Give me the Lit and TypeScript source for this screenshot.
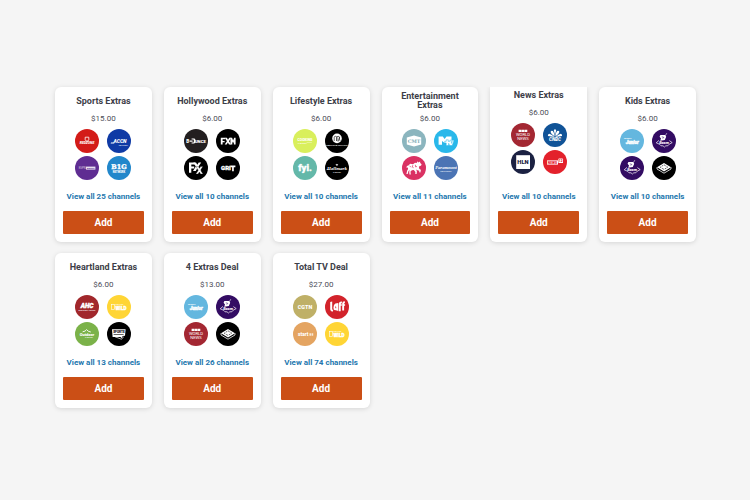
import { LitElement, html, svg, css, SVGTemplateResult } from "lit";
import { customElement, property } from "lit/decorators.js";
import { classMap } from "lit/directives/class-map.js";

interface Logo {
  name: string;
  color: string;
  art: SVGTemplateResult;
}

interface Pack {
  name: string;
  price: string;
  count: number;
  logos: string[];
  raised?: boolean;
}

const logos: Record<string, Logo> = {
  redzone: {
    name: "RedZone",
    color: "#d31b18",
    art: svg`<path d="M10.2 8.2h3.6v2.6q0 .9-1.8 1.4-1.8-.5-1.8-1.4z" fill="none" stroke="#fff" stroke-width=".8"/>
      <text class="b i" x="12" y="15.2" font-size="3.4">REDZONE</text>`,
  },
  accn: {
    name: "ACC Network",
    color: "#0f3aa5",
    art: svg`<text class="b i" x="13" y="13.6" font-size="5">ACCN</text>
      <path d="M4 13.6h4l-1 .8H3.6z"/><text x="16.4" y="16.6" font-size="2">NETWORK</text>`,
  },
  bases: {
    name: "Bases Loaded",
    color: "#5f2d92",
    art: svg`<text x="7.2" y="13" font-size="2.8" opacity=".7">ESPN</text>
      <rect x="11" y="10.6" width="9.4" height="3" opacity=".85"/>
      <text class="b" x="15.7" y="13.1" font-size="2.4" style="fill:#5f2d92">BASES</text>`,
  },
  big: {
    name: "Big Ten Network",
    color: "#2287cb",
    art: svg`<text class="slab" x="12" y="12.8" font-size="6.4" stroke="#fff" stroke-width=".4">B1G</text>
      <text class="b" x="12" y="16.8" font-size="2.6">NETWORK</text>`,
  },
  bounce: {
    name: "Bounce",
    color: "#231f20",
    art: svg`<text class="b" x="3.8" y="13.8" font-size="4.6">B</text><text class="b" x="16.3" y="13.8" font-size="4.4">UNCE</text>
      <path d="M5.6 11.6h3v1.2h-3zM7.6 9.6h2.6q1.3 0 1.3 2.4t-1.3 2.4H7.6v-1h2q.6-1.4 0-2.8h-2z"/>`,
  },
  fxm: {
    name: "FXM",
    color: "#000000",
    art: svg`<path d="M4.8 8.8h4.4v1.5H6.6V12h2v1.3h-2v2.3H4.8z"/>
      <path d="M8.8 8.8h2.1l1.1 2 1.2-2h2l-2.2 3.4 2.1 3.4H13l-1.1-2.1-1.2 2.1h-2l2.2-3.4z"/>
      <path d="M14.4 8.8h1.7l1 2.6 1.1-2.6h1.4v6.8h-1.7v-3.2l-.8 1.8-.8-1.8v3.2h-1.9z"/>`,
  },
  fxx: {
    name: "FXX",
    color: "#000000",
    art: svg`<path d="M5 6.4h6v2.1H7.3v2.1h2.9v1.9H7.3v4.3H5z"/>
      <path d="M9.3 6.4h2.7l1.3 2.4 1.4-2.4h2.5l-2.7 4.2 2.8 4.3h-2.6l-1.5-2.5-1.5 2.5H9l2.8-4.3z"/>
      <path d="M12 10.6h2.3l1.1 1.8 1.2-1.8h2.3l-2.4 3.6 2.5 3.8h-2.4l-1.2-2-1.4 2h-2.2l2.5-3.8z" stroke="#000" stroke-width=".3"/>`,
  },
  grit: {
    name: "Grit",
    color: "#000000",
    art: svg`<text class="b" x="10" y="14.2" font-size="6" stroke="#fff" stroke-width=".3">GRI</text>
      <path d="M14.4 9.6h5v1.6h-1.6v4h-1.7v-4h-1.7z"/>`,
  },
  cooking: {
    name: "Cooking Channel",
    color: "#d9ef5c",
    art: svg`<text class="b" x="12" y="12" font-size="3.4">COOKING</text>
      <text x="9.2" y="14.6" font-size="2">CHANNEL</text><path d="M13.6 13.2h5.2v.7h-5.2z" opacity=".5"/>`,
  },
  magnolia: {
    name: "Magnolia Network",
    color: "#000000",
    art: svg`<circle cx="12" cy="9.4" r="4.8"/>
      <path d="M9.2 12V8.6q0-1.3 1.3-1.3t1.3 1.3V12 8.6q0-1.3 1.3-1.3t1.3 1.3v2q0 1 1 .8M13 12.6l1.8-4.8" fill="none" stroke="#000" stroke-width=".6"/>
      <text x="12" y="17" font-size="2.2">MAGNOLIA NETWORK</text>`,
  },
  fyi: {
    name: "FYI",
    color: "#64b8a9",
    art: svg`<text class="b" x="12" y="14.6" font-size="9.4" stroke="#fff" stroke-width=".3">fyi.</text>`,
  },
  hallmark: {
    name: "Hallmark",
    color: "#000000",
    art: svg`<path d="M10.6 8l.5 1.4h1.6l.5-1.4-.8.6-.5-.9-.5.9z"/>
      <text class="script" x="12" y="13.8" font-size="5">Hallmark</text>
      <text x="12" y="16.8" font-size="1.8">CHANNEL</text><path d="M1.6 13.4h2.6v.5H1.6z"/>`,
  },
  cmt: {
    name: "CMT",
    color: "#8bb5be",
    art: svg`<path d="M12 6.4l7.2 2.2v6.8L12 17.6l-7.2-2.2V8.6z"/>
      <text class="slab" x="12" y="13.8" font-size="4.8" style="fill:#7eacb6">CMT</text>`,
  },
  mtv: {
    name: "MTV",
    color: "#29b8ea",
    art: svg`<path d="M4.6 7.4h4.2l1.8 2.6 1.9-2.6h5v8.4h-3.2V12l-1.7 2h-2L8 12v3.8H4.6z"/>
      <path d="M10.6 12.4h1.6v-1.6h2.1v1.6h1.6v-1.2h4.2l-1.9 5.3h-2.6l-.6-2h-.5v2h-2.3v-2.6h-1.6z" stroke="#29b8ea" stroke-width=".5"/>
      <path d="M17.2 11.8l.4 2.6.8-2.6" fill="none" stroke="#29b8ea" stroke-width=".5"/>`,
  },
  bull: {
    name: "Western Channel",
    color: "#da3263",
    art: svg`<path d="M4.4 11.8l.5-1.8 1.5-.5 1.8-1.7 2.8.4 2-1.4 1.6.2 1.2-1.7.5 1.2 1.8-1 .1 1.6 1.4 1.2-.6 1.5-1.6.1-.5 2 .9 1.4 1.1.5-.5 2.6-1.2-.2.1-1.4-1.8-.6-1.3-.6.7 1.8-.3 2.5h-1.3l.1-2-1.6-1.9-1.9.2-1.4 1.3.3 2.9H7.5l-.3-2.6.6-1.6-1.3.8-.8 2.9H4.4l.8-3.4.9-1.6-.3-1.4z"/>
      <path d="M7.6 9.8l1.4 1.5M10.8 9.2l-.6 1.8 1.4.7M13.4 8.8l.1 2 1.5-.3" fill="none" stroke="#da3263" stroke-width=".7"/>`,
  },
  paramount: {
    name: "Paramount Network",
    color: "#4b74b4",
    art: svg`<text class="script" x="12" y="12.8" font-size="4.6">Paramount</text>
      <text x="12" y="15.8" font-size="2.4">NETWORK</text>`,
  },
  bbc: {
    name: "BBC World News",
    color: "#a32732",
    art: svg`<path d="M7.6 6.7h2.7V9H7.6zM10.6 6.7h2.7V9h-2.7zM13.6 6.7h2.7V9h-2.7z"/>
      <text x="12" y="13.2" font-size="4.2">WORLD</text><text x="12" y="17.4" font-size="4.2">NEWS</text>`,
  },
  cnbc: {
    name: "CNBC",
    color: "#105397",
    art: svg`<path d="M11.6 14L4.9 12.9q-.3-2 1.4-2.2 1.8.3 5.3 3.3zM11.7 13.6Q7.3 10.2 7.6 8.7q.7-1.6 2.2-.8 1.2 1.1 1.9 5.7zM12 12.2l-1.2-5Q12 5.3 13.2 7.2zM12.3 13.6q.6-4.6 1.9-5.7 1.5-.8 2.2.8.2 1.5-4.1 4.9zM12.4 14l6.7-1.1q.3-2-1.4-2.2-1.8.3-5.3 3.3z"/>
      <text class="b i" x="12" y="17.8" font-size="4.6">CNBC</text>`,
  },
  hln: {
    name: "HLN",
    color: "#1b2142",
    art: svg`<rect x="5.2" y="5.2" width="13.8" height="13.8"/>
      <text class="b" x="12" y="14.2" font-size="5.8" style="fill:#1b2142">HLN</text>`,
  },
  news12: {
    name: "News 12",
    color: "#e3212b",
    art: svg`<rect x="4" y="10.4" width="11" height="4.2"/>
      <text class="b" x="9.5" y="13.8" font-size="3.4" style="fill:#e3212b">NEWS</text>
      <rect x="15.4" y="8.6" width="4.6" height="4.4" rx=".6"/>
      <text class="b" x="17.7" y="12" font-size="3.2" style="fill:#e3212b">12</text>`,
  },
  junior: {
    name: "Disney Junior",
    color: "#64b7df",
    art: svg`<text class="script" x="7.8" y="9.6" font-size="2.8">Disney</text>
      <text class="b i" x="12.2" y="14.8" font-size="4.6" stroke="#fff" stroke-width=".4">Junior</text>`,
  },
  boomerang: {
    name: "Boomerang",
    color: "#330c63",
    art: svg`<path d="M8.4 6h4.8l1 1.8-1.4 3.2-4.6.8.8-2.4-1.4-1.6z"/>
      <path d="M13.4 6.6l1.4-2.4M9.8 7.6l2.6.6" stroke="#fff" stroke-width=".6"/>
      <path d="M9.8 7.8l2 .6-1 1.2" fill="none" stroke="#330c63" stroke-width=".6"/>
      <path d="M7 11.4l-2.8 2.4 3.2 1.4 1.6 1.6h2l1.4 1.2 1.4-1.2h2l1.4-1.6 3-1.6-2.8-2" fill="none" stroke="#fff" stroke-width=".7"/>
      <text class="b i" x="12" y="14.6" font-size="3.8">Boom</text>`,
  },
  tiles: {
    name: "Kids Stack",
    color: "#000000",
    art: svg`<path d="M12 7l7 4.2-7 4.2-7-4.2z"/>
      <path d="M5 11.2v1.8l7 4.2 7-4.2v-1.8" fill="none" stroke="#fff" stroke-width=".8"/>
      <path d="M12 8.8l3.8 2.4-3.8 2.2-3.8-2.2z" fill="none" stroke="#000" stroke-width=".6" stroke-dasharray="2 1"/>`,
  },
  ahc: {
    name: "American Heroes Channel",
    color: "#a1272b",
    art: svg`<text class="b i" x="12" y="13.2" font-size="6.4" stroke="#fff" stroke-width=".4">AHC</text>
      <text x="12" y="16.4" font-size="1.9">AMERICAN HEROES</text>`,
  },
  wild: {
    name: "Nat Geo Wild",
    color: "#ffd535",
    art: svg`<rect x="4.4" y="9.6" width="3.2" height="5" fill="none" stroke="#fff" stroke-width=".6"/>
      <text x="12.4" y="10" font-size="2">NAT GEO</text>
      <text class="b" x="14" y="15" font-size="4.6" stroke="#fff" stroke-width=".3">WILD</text>`,
  },
  outdoor: {
    name: "Outdoor Channel",
    color: "#7bb249",
    art: svg`<path d="M7.6 9.8q2.8-.3 4-2.2 1.2 2 4.2 2.4" fill="none" stroke="#fff" stroke-width=".9"/>
      <text class="b" x="12" y="13.8" font-size="4">Outdoor</text>
      <text x="14" y="16.4" font-size="1.8">CHANNEL</text>`,
  },
  sports: {
    name: "Sportsman Channel",
    color: "#000000",
    art: svg`<path d="M5 7.2h13.6l-.6 6.6-2.4.3-.6 2.2-1.6-1.2-7.8-.2z"/>
      <path d="M8 14.8l6.4 2.4 2.4-2.4" fill="none" stroke="#fff" stroke-width=".7"/>
      <text class="b" x="11.9" y="10.8" font-size="3" style="fill:#000">SPORTS</text><path d="M6.6 12.2h10v.6h-10z" style="fill:#000"/>`,
  },
  cgtn: {
    name: "CGTN",
    color: "#bfb067",
    art: svg`<text class="b" x="12" y="14" font-size="5.4">CGTN</text>`,
  },
  laff: {
    name: "Laff",
    color: "#d2232b",
    art: svg`<path d="M5.2 7l2-.4v8l1.1.5-.7 1.7q-2.2-.3-2.4-2.2z"/>
      <path d="M10.4 8.5l2.8-.6v7.8h-1.6l-.4-.7q-2.8 1.1-2.8-2.3.1-3.4 2-4.2zm.5 2.2q-1.4 2.6.4 2.6z" fill-rule="evenodd"/>
      <path d="M13.7 16.2V9q.2-2.8 3.2-2.6v1.8q-1.2 0-1.2 1.1h1.1v1.5h-1.1v5.4zM17.2 15.6V8.6q.2-2.5 2.7-2.2v1.7q-.8 0-.8 1.1h1v1.5h-1v4.9z"/>`,
  },
  starts: {
    name: "Start TV",
    color: "#e4a461",
    art: svg`<text class="b" x="10.2" y="13.8" font-size="4.8">start</text>
      <path d="M16.4 11.2H18v2.6h-1.6zM18.5 11.2h1.7v2.6h-1.7z" opacity=".75"/>`,
  },
};

const packs: Pack[] = [
  { name: "Sports Extras", price: "$15.00", count: 25, logos: ["redzone", "accn", "bases", "big"] },
  { name: "Hollywood Extras", price: "$6.00", count: 10, logos: ["bounce", "fxm", "fxx", "grit"] },
  { name: "Lifestyle Extras", price: "$6.00", count: 10, logos: ["cooking", "magnolia", "fyi", "hallmark"] },
  { name: "Entertainment Extras", price: "$6.00", count: 11, logos: ["cmt", "mtv", "bull", "paramount"] },
  { name: "News Extras", price: "$6.00", count: 10, logos: ["bbc", "cnbc", "hln", "news12"], raised: true },
  { name: "Kids Extras", price: "$6.00", count: 10, logos: ["junior", "boomerang", "boomerang", "tiles"] },
  { name: "Heartland Extras", price: "$6.00", count: 13, logos: ["ahc", "wild", "outdoor", "sports"] },
  { name: "4 Extras Deal", price: "$13.00", count: 26, logos: ["junior", "boomerang", "bbc", "tiles"] },
  { name: "Total TV Deal", price: "$27.00", count: 74, logos: ["cgtn", "laff", "starts", "wild"] },
];

@customElement("channel-logo")
export class ChannelLogo extends LitElement {
  @property() logo = "";

  static styles = css`
    :host {
      display: block;
    }
    .logo {
      display: block;
      width: 24px;
      height: 24px;
      fill: #fff;
      font-family: Roboto, "Liberation Sans", sans-serif;
    }
    text {
      fill: #fff;
      text-anchor: middle;
    }
    .b {
      font-weight: 900;
    }
    .i {
      font-style: italic;
    }
    .slab {
      font-family: "DejaVu Serif", serif;
      font-weight: 700;
    }
    .script {
      font-family: "Liberation Serif", serif;
      font-style: italic;
      font-weight: 700;
    }
  `;

  render() {
    const l = logos[this.logo];
    return html`<svg class="logo" viewBox="0 0 24 24" role="img" aria-label=${l.name}>
      <circle cx="12" cy="12" r="12" fill=${l.color}></circle>
      ${l.art}
    </svg>`;
  }
}

@customElement("pack-card")
export class PackCard extends LitElement {
  @property({ attribute: false }) pack!: Pack;

  static styles = css`
    :host {
      display: block;
    }
    .card {
      box-sizing: border-box;
      height: 100%;
      display: flex;
      flex-direction: column;
      align-items: center;
      padding: 5px 8px 8px;
      background: #fff;
      border-radius: 6px;
      box-shadow: 0 1px 5px rgba(0, 0, 0, 0.13);
      text-align: center;
    }
    .title {
      display: flex;
      align-items: center;
      min-height: 18px;
      margin: 0;
      font-size: 9px;
      line-height: 9px;
      font-weight: 700;
      color: #3d3e48;
    }
    .raised {
      padding-top: 0;
      border-radius: 0 0 6px 6px;
      clip-path: inset(0 -8px -8px);
    }
    .raised .title {
      min-height: 17px;
    }
    .price {
      margin: 3px 0 4px;
      font-size: 8px;
      line-height: 12px;
      color: #4c4d57;
    }
    .logos {
      display: grid;
      grid-template-columns: 24px 24px;
      gap: 3px 8px;
      margin-bottom: 11px;
    }
    .more {
      margin-top: auto;
      font-size: 8px;
      line-height: 12px;
      font-weight: 700;
      color: #2377ae;
      text-decoration: none;
      white-space: nowrap;
    }
    .add {
      align-self: stretch;
      height: 23px;
      margin: 8px 0 0;
      padding: 0;
      border: 0;
      border-radius: 1px;
      background: #cb4f16;
      color: #fff;
      font: 700 10px/12px Roboto, "Liberation Sans", sans-serif;
      cursor: pointer;
    }
  `;

  render() {
    const p = this.pack;
    return html`<article class=${classMap({ card: true, raised: !!p.raised })}>
      <h2 class="title">${p.name}</h2>
      <p class="price">${p.price}</p>
      <div class="logos">${p.logos.map((l) => html`<channel-logo .logo=${l}></channel-logo>`)}</div>
      <a class="more" href="#channels">View all ${p.count} channels</a>
      <button class="add" type="button" aria-label="Add ${p.name}">Add</button>
    </article>`;
  }
}

@customElement("app-root")
export class AppRoot extends LitElement {
  static styles = css`
    :host {
      display: block;
      box-sizing: border-box;
      min-height: 100vh;
      padding: 87px 54px 32px 55px;
      background: #f5f5f5;
      font-family: Roboto, "Liberation Sans", sans-serif;
    }
    .packs {
      display: grid;
      grid-template-columns: repeat(auto-fill, minmax(96px, 1fr));
      gap: 11px 12px;
    }
  `;

  render() {
    return html`<main class="packs">${packs.map((p) => html`<pack-card .pack=${p}></pack-card>`)}</main>`;
  }
}
